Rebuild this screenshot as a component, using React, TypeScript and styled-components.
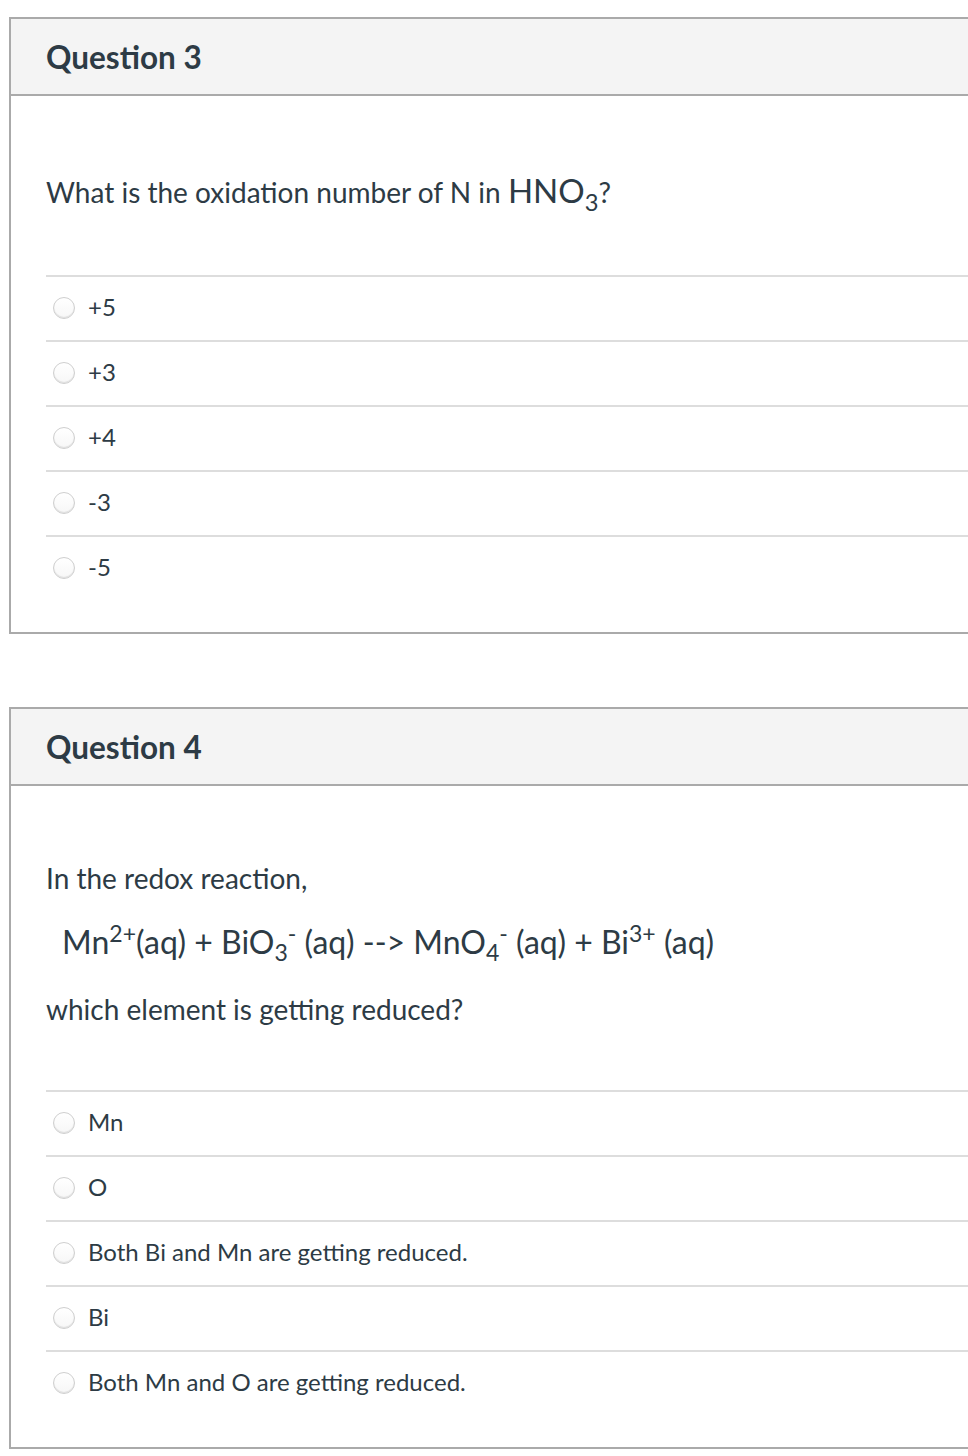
import React from 'react';
import styled, { createGlobalStyle } from 'styled-components';

const Global = createGlobalStyle`
  html, body { margin: 0; padding: 0; background: #ffffff; }
  body {
    font-family: Lato, "Open Sans", "Liberation Sans", sans-serif;
    color: #2d3b45;
    -webkit-font-smoothing: antialiased;
  }
`;

const Page = styled.div`
  padding: 17px 0 8px 9px;
  display: flex;
  flex-direction: column;
  gap: 73px;
`;

const Card = styled.section`
  border: 2px solid #aaaaaa;
  border-right: none;
  background: #ffffff;
`;

const Header = styled.header`
  height: 75px;
  background: #f4f4f4;
  border-bottom: 2px solid #aaaaaa;
  display: flex;
  align-items: center;
  padding-left: 35px;
`;

const Title = styled.h2`
  margin: 0;
  font-size: 31.5px;
  font-weight: 700;
  color: #2d3b45;
`;

const Body = styled.div<{ $top: number }>`
  padding: ${p => p.$top}px 0 32px 35px;
`;

const Text = styled.p<{ $mb: number; $indent?: number; $size?: number }>`
  margin: 0 0 ${p => p.$mb}px ${p => p.$indent ?? 0}px;
  font-size: ${p => p.$size ?? 28}px;
  line-height: 36px;
  color: #2d3b45;
  sub, sup { font-size: 0.72em; line-height: 0; }
`;

const Big = styled.span`
  font-size: 33px;
`;

const List = styled.ul`
  list-style: none;
  margin: 0;
  padding: 0;
`;

const Row = styled.li`
  height: 63px;
  box-sizing: content-box;
  border-top: 2px solid #dddddd;
  display: flex;
  align-items: center;
  gap: 13px;
  padding-left: 7px;
`;

const Radio = styled.span`
  width: 22px;
  height: 22px;
  box-sizing: border-box;
  border-radius: 50%;
  border: 1px solid #cfcfcf;
  background: linear-gradient(#ffffff, #f7f7f7);
  box-shadow: inset 0 -1px 1px rgba(0, 0, 0, 0.1);
  flex: none;
  margin-bottom: 2px;
`;

const Label = styled.span`
  font-size: 24px;
  line-height: 30px;
  padding-bottom: 4px;
  color: #2d3b45;
`;

const Answer = ({ children }: { children: React.ReactNode }) => (
  <Row>
    <Radio />
    <Label>{children}</Label>
  </Row>
);

export default function App() {
  return (
    <>
      <Global />
      <Page>
        <Card>
          <Header>
            <Title>Question 3</Title>
          </Header>
          <Body $top={76}>
            <Text $mb={65}>
              What is the oxidation number of N in <Big>HNO<sub>3</sub></Big>?
            </Text>
            <List>
              <Answer>+5</Answer>
              <Answer>+3</Answer>
              <Answer>+4</Answer>
              <Answer>-3</Answer>
              <Answer>-5</Answer>
            </List>
          </Body>
        </Card>
        <Card>
          <Header>
            <Title>Question 4</Title>
          </Header>
          <Body $top={74}>
            <Text $mb={28}>In the redox reaction,</Text>
            <Text $mb={31} $indent={16} $size={32}>
              Mn<sup>2+</sup>(aq) + BiO<sub>3</sub><sup>-</sup> (aq) --&gt; MnO<sub>4</sub><sup>-</sup> (aq) + Bi
              <sup>3+</sup> (aq)
            </Text>
            <Text $mb={63}>which element is getting reduced?</Text>
            <List>
              <Answer>Mn</Answer>
              <Answer>O</Answer>
              <Answer>Both Bi and Mn are getting reduced.</Answer>
              <Answer>Bi</Answer>
              <Answer>Both Mn and O are getting reduced.</Answer>
            </List>
          </Body>
        </Card>
      </Page>
    </>
  );
}
